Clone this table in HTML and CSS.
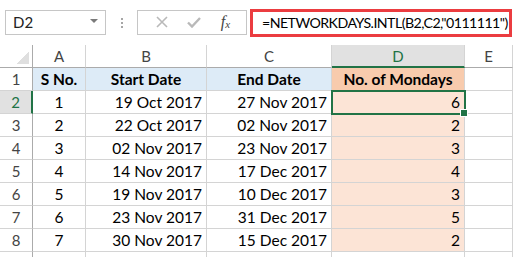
FILE: index.html
```html
<!DOCTYPE html>
<html lang="en">
<head>
    <meta charset="UTF-8">
    <title>NETWORKDAYS.INTL - Mondays</title>
    <link rel="stylesheet" href="styles.css">
</head>
<body>
    <div class="toolbar">
        <div class="namebox">
            <span>D2</span>
            <svg class="caret" width="8" height="4" viewBox="0 0 8 4"><path d="M0 0H8L4 4Z" fill="#7a7a7a"/></svg>
        </div>
        <div class="grip"><i></i><i></i><i></i></div>
        <div class="fbuttons">
            <svg width="12" height="12" viewBox="0 0 12 12"><path d="M1 1L11 11M11 1L1 11" stroke="#b9b9b9" stroke-width="1.6"/></svg>
            <svg width="14" height="12" viewBox="0 0 14 12"><path d="M1 6.5L5 10.5L13 2" stroke="#b9b9b9" stroke-width="2.4" fill="none"/></svg>
            <span class="fx">f<sub>x</sub></span>
        </div>
        <div class="formula">=NETWORKDAYS.INTL(B2,C2,"0111111")</div>
    </div>

    <div class="sheet">
        <div class="corner"></div>
        <div class="colhead">A</div>
        <div class="colhead">B</div>
        <div class="colhead">C</div>
        <div class="colhead sel">D</div>
        <div class="colhead">E</div>

        <div class="rowhead">1</div>
        <div class="cell title center">S No.</div>
        <div class="cell title center">Start Date</div>
        <div class="cell title center">End Date</div>
        <div class="cell title result center">No. of Mondays</div>
        <div class="cell"></div>

        <div class="rowhead sel">2</div>
        <div class="cell center">1</div>
        <div class="cell right">19 Oct 2017</div>
        <div class="cell right">27 Nov 2017</div>
        <div class="cell count right active">6<span class="handle"></span></div>
        <div class="cell"></div>

        <div class="rowhead">3</div>
        <div class="cell center">2</div>
        <div class="cell right">22 Oct 2017</div>
        <div class="cell right">02 Nov 2017</div>
        <div class="cell count right">2</div>
        <div class="cell"></div>

        <div class="rowhead">4</div>
        <div class="cell center">3</div>
        <div class="cell right">02 Nov 2017</div>
        <div class="cell right">23 Nov 2017</div>
        <div class="cell count right">3</div>
        <div class="cell"></div>

        <div class="rowhead">5</div>
        <div class="cell center">4</div>
        <div class="cell right">14 Nov 2017</div>
        <div class="cell right">17 Dec 2017</div>
        <div class="cell count right">4</div>
        <div class="cell"></div>

        <div class="rowhead">6</div>
        <div class="cell center">5</div>
        <div class="cell right">19 Nov 2017</div>
        <div class="cell right">10 Dec 2017</div>
        <div class="cell count right">3</div>
        <div class="cell"></div>

        <div class="rowhead">7</div>
        <div class="cell center">6</div>
        <div class="cell right">23 Nov 2017</div>
        <div class="cell right">31 Dec 2017</div>
        <div class="cell count right">5</div>
        <div class="cell"></div>

        <div class="rowhead">8</div>
        <div class="cell center">7</div>
        <div class="cell right">30 Nov 2017</div>
        <div class="cell right">15 Dec 2017</div>
        <div class="cell count right">2</div>
        <div class="cell"></div>

        <div class="rowhead"></div>
        <div class="cell"></div>
        <div class="cell"></div>
        <div class="cell"></div>
        <div class="cell"></div>
        <div class="cell"></div>
    </div>
</body>
</html>
```

FILE: styles.css
```css
body {
    margin: 0;
    background: #fff;
    font-family: Lato, "Liberation Sans", sans-serif;
    color: #000;
    overflow: hidden;
    height: 257px;
}

/* formula bar */
.toolbar {
    display: flex;
    align-items: center;
    height: 45px;
    padding-left: 5px;
    box-sizing: border-box;
}
.namebox {
    width: 101px;
    height: 25px;
    box-sizing: border-box;
    border: 1px solid #c6c6c6;
    display: flex;
    align-items: center;
    justify-content: space-between;
    padding: 0 7px 0 7px;
    font-size: 15px;
    color: #222;
    margin-top: -1px;
}
.caret {
    margin-top: -2px;
}
.grip {
    width: 31px;
    display: flex;
    flex-direction: column;
    align-items: center;
    gap: 2px;
}
.grip i {
    width: 2px;
    height: 2px;
    background: #a6a6a6;
}
.fbuttons {
    width: 110px;
    height: 25px;
    box-sizing: border-box;
    border: 1px solid #c6c6c6;
    display: flex;
    align-items: center;
    justify-content: space-around;
    padding: 0 6px 0 8px;
    margin-top: -1px;
}
.fx {
    font-family: "Liberation Serif", serif;
    font-style: italic;
    font-size: 16px;
    color: #444;
}
.fx sub {
    font-size: 11px;
    vertical-align: -1px;
}
.formula {
    margin-left: 3px;
    width: 262px;
    height: 28px;
    box-sizing: border-box;
    border: 3px solid #eb3c40;
    display: flex;
    align-items: center;
    padding-left: 9px;
    font-size: 14.2px;
    letter-spacing: -0.55px;
    white-space: nowrap;
    overflow: hidden;
}

/* grid */
.sheet {
    display: grid;
    grid-template-columns: 33px 53px 121px 125px 133px 48px;
    grid-auto-rows: 23px;
    height: 212px;
    overflow: hidden;
    font-size: 15.5px;
}
.sheet > div {
    box-sizing: border-box;
    border-right: 1px solid #d4d4d4;
    border-bottom: 1px solid #d4d4d4;
    white-space: nowrap;
    position: relative;
}
.corner {
    background: linear-gradient(135deg, transparent 62%, #dfdfdf 62%) no-repeat right 3px bottom 3px / 16px 16px;
    border-right-color: #ababab !important;
    border-bottom-color: #ababab !important;
}
.colhead {
    text-align: center;
    font-size: 15px;
    color: #444;
    line-height: 22px;
    border-bottom-color: #ababab !important;
}
.colhead.sel {
    background: #e1e1e1;
    color: #217346;
    border-bottom: 2px solid #217346 !important;
}
.rowhead {
    text-align: center;
    font-size: 15px;
    color: #444;
    line-height: 22px;
    border-right-color: #ababab !important;
}
.rowhead.sel {
    background: #e1e1e1;
    color: #217346;
    border-right: 2px solid #217346 !important;
}
.cell {
    line-height: 23px;
    padding: 0 4px;
}
.center { text-align: center; }
.right { text-align: right; }

.title {
    background: #ddebf7;
    font-weight: bold;
}
.title.result {
    background: #f8cbad;
}
.count {
    background: #fce4d6;
}
.active {
    outline: 2px solid #217346;
    outline-offset: -1px;
    z-index: 1;
}
.handle {
    position: absolute;
    right: -4px;
    bottom: -4px;
    width: 6px;
    height: 6px;
    background: #217346;
    border: 1px solid #fff;
}
```
